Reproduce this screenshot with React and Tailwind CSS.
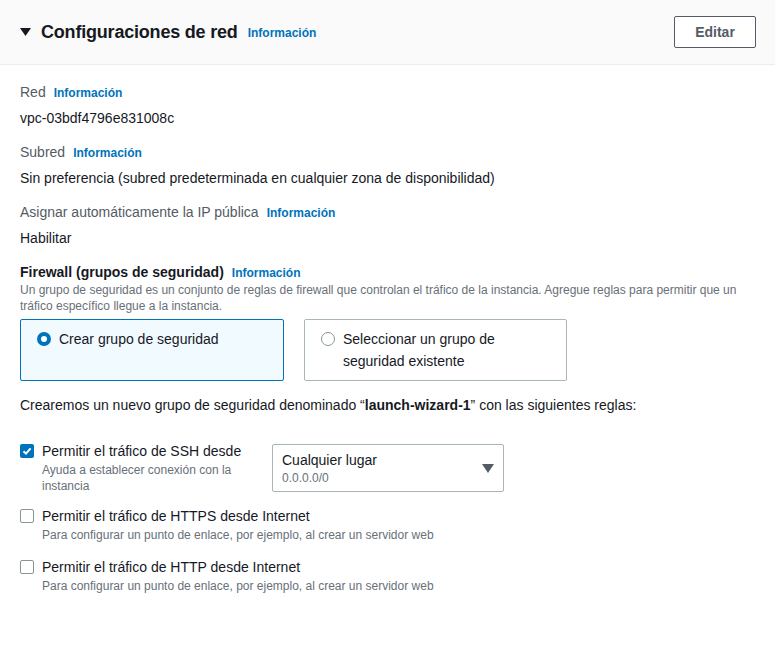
export default function App() {
    const info = <span className="ml-2 text-[12px] font-bold leading-none text-[#0073bb]">Información</span>;

    const Field = ({ label, value }) => (
        <div className="mb-3">
            <div className="h-[22px] text-[14px] leading-[22px] text-[#545b64]">{label}{info}</div>
            <div className="mt-1 text-[14px] leading-[22px] text-[#16191f]">{value}</div>
        </div>
    );

    const Check = ({ checked }) => checked ? (
        <span className="mt-[4px] flex h-[14px] w-[14px] shrink-0 items-center justify-center rounded-[2px] bg-[#0073bb]">
            <svg width="10" height="10" viewBox="0 0 10 10"><path d="M1.5 5.2 4 7.6 8.6 2.4" fill="none" stroke="white" strokeWidth="2" /></svg>
        </span>
    ) : (
        <span className="mt-[4px] block h-[14px] w-[14px] shrink-0 rounded-[2px] border border-[#879596] bg-white" />
    );

    return (
        <div className="min-h-[649px] w-full bg-white font-['Liberation_Sans',Arial,sans-serif]">
            <div className="flex h-[65px] items-center justify-between border-b border-[#eaeded] bg-[#fafafa] pl-5 pr-[19px]">
                <div className="flex items-center">
                    <svg width="11" height="8" viewBox="0 0 11 8" className="mr-[10px]"><path d="M0 0h11L5.5 8z" fill="#16191f" /></svg>
                    <h2 className="text-[18px] font-bold tracking-[-0.2px] text-[#16191f]">Configuraciones de red</h2>
                    <span className="ml-[10px] mt-[2px] text-[12px] font-bold text-[#0073bb]">Información</span>
                </div>
                <button className="h-[32px] w-[82px] rounded-[2px] border border-[#545b64] bg-white text-[14px] font-bold text-[#545b64]">Editar</button>
            </div>

            <div className="px-5 pt-4">
                <Field label="Red" value="vpc-03bdf4796e831008c" />
                <Field label="Subred" value="Sin preferencia (subred predeterminada en cualquier zona de disponibilidad)" />
                <Field label="Asignar automáticamente la IP pública" value="Habilitar" />

                <div className="mt-[13px] h-[20px] text-[14px] font-bold leading-[20px] text-[#16191f]">Firewall (grupos de seguridad){info}</div>
                <p className="text-[12px] leading-[16px] text-[#687078]">
                    Un grupo de seguridad es un conjunto de reglas de firewall que controlan el tráfico de la instancia. Agregue reglas para permitir que un tráfico específico llegue a la instancia.
                </p>

                <div className="mt-[5px] flex gap-[20px]">
                    <div className="h-[62px] w-[264px] rounded-[2px] border border-[#0073bb] bg-[#f1faff] px-4 pt-[8px]">
                        <div className="flex gap-2 text-[14px] leading-[22px] text-[#16191f]">
                            <span className="mt-[4px] block h-[14px] w-[14px] shrink-0 rounded-full border-[4px] border-[#0073bb] bg-white" />
                            Crear grupo de seguridad
                        </div>
                    </div>
                    <div className="h-[62px] w-[263px] rounded-[2px] border border-[#aab7b8] bg-white px-4 pt-[8px]">
                        <div className="flex gap-2 text-[14px] leading-[22px] text-[#16191f]">
                            <span className="mt-[4px] block h-[14px] w-[14px] shrink-0 rounded-full border border-[#879596] bg-white" />
                            <span className="w-[170px]">Seleccionar un grupo de seguridad existente</span>
                        </div>
                    </div>
                </div>

                <p className="mt-[13px] text-[14px] leading-[22px] text-[#16191f]">
                    Crearemos un nuevo grupo de seguridad denominado “<b>launch-wizard-1</b>” con las siguientes reglas:
                </p>

                <div className="mt-[24px] flex gap-[22px]">
                    <div className="flex w-[230px] gap-2">
                        <Check checked />
                        <div>
                            <div className="text-[14px] leading-[22px] text-[#16191f]">Permitir el tráfico de SSH desde</div>
                            <div className="text-[12px] leading-[16px] text-[#687078]">Ayuda a establecer conexión con la instancia</div>
                        </div>
                    </div>
                    <div className="mt-[4px] flex h-[48px] w-[232px] items-center justify-between rounded-[2px] border border-[#aab7b8] pl-[9px] pr-[9px]">
                        <div>
                            <div className="text-[14px] leading-[20px] text-[#16191f]">Cualquier lugar</div>
                            <div className="text-[12px] leading-[16px] text-[#687078]">0.0.0.0/0</div>
                        </div>
                        <svg width="12" height="9" viewBox="0 0 12 9"><path d="M0 0h12L6 9z" fill="#545b64" /></svg>
                    </div>
                </div>

                <div className="mt-[11px] flex gap-2">
                    <Check />
                    <div>
                        <div className="text-[14px] leading-[22px] text-[#16191f]">Permitir el tráfico de HTTPS desde Internet</div>
                        <div className="text-[12px] leading-[16px] text-[#687078]">Para configurar un punto de enlace, por ejemplo, al crear un servidor web</div>
                    </div>
                </div>

                <div className="mt-[13px] flex gap-2">
                    <Check />
                    <div>
                        <div className="text-[14px] leading-[22px] text-[#16191f]">Permitir el tráfico de HTTP desde Internet</div>
                        <div className="text-[12px] leading-[16px] text-[#687078]">Para configurar un punto de enlace, por ejemplo, al crear un servidor web</div>
                    </div>
                </div>
            </div>
        </div>
    );
}
